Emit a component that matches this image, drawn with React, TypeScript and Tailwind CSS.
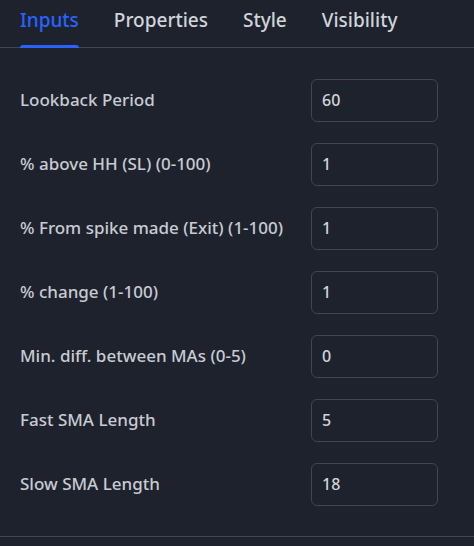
import React from 'react';

const tabs = ['Inputs', 'Properties', 'Style', 'Visibility'];

const fields = [
  { label: 'Lookback Period', value: '60' },
  { label: '% above HH (SL) (0-100)', value: '1' },
  { label: '% From spike made (Exit) (1-100)', value: '1' },
  { label: '% change (1-100)', value: '1' },
  { label: 'Min. diff. between MAs (0-5)', value: '0' },
  { label: 'Fast SMA Length', value: '5' },
  { label: 'Slow SMA Length', value: '18' },
];

export default function App() {
  return (
    <div
      className="w-[474px] h-[546px] bg-[#1e222d] text-[#d1d4dc] overflow-hidden"
      style={{ fontFamily: '"Noto Sans", "Open Sans", sans-serif' }}
    >
      {/* Tabs */}
      <div className="flex h-[48px] border-b border-[#434651] pl-[20px] gap-[35px]">
        {tabs.map((t, i) => (
          <div
            key={t}
            className={`relative flex items-start pt-[6px] text-[19px] font-medium ${
              i === 0 ? 'text-[#2962ff]' : 'text-[#d1d4dc]'
            }`}
          >
            {t}
            {i === 0 && (
              <div className="absolute left-0 right-0 bottom-[-1px] h-[3px] bg-[#2962ff] rounded-t-sm" />
            )}
          </div>
        ))}
      </div>

      {/* Fields */}
      <div className="pt-[20px] pb-[20px] border-b border-[#434651]">
        {fields.map((f) => (
          <div key={f.label} className="flex items-center h-[64px] pl-[20px] pr-[36px]">
            <div className="flex-1 text-[17px] font-medium text-[#c8cbd2]">{f.label}</div>
            <div className="w-[127px] h-[43px] border border-[#434651] rounded-[6px] flex items-center pl-[10px] text-[16px] font-medium">
              {f.value}
            </div>
          </div>
        ))}
      </div>
    </div>
  );
}
